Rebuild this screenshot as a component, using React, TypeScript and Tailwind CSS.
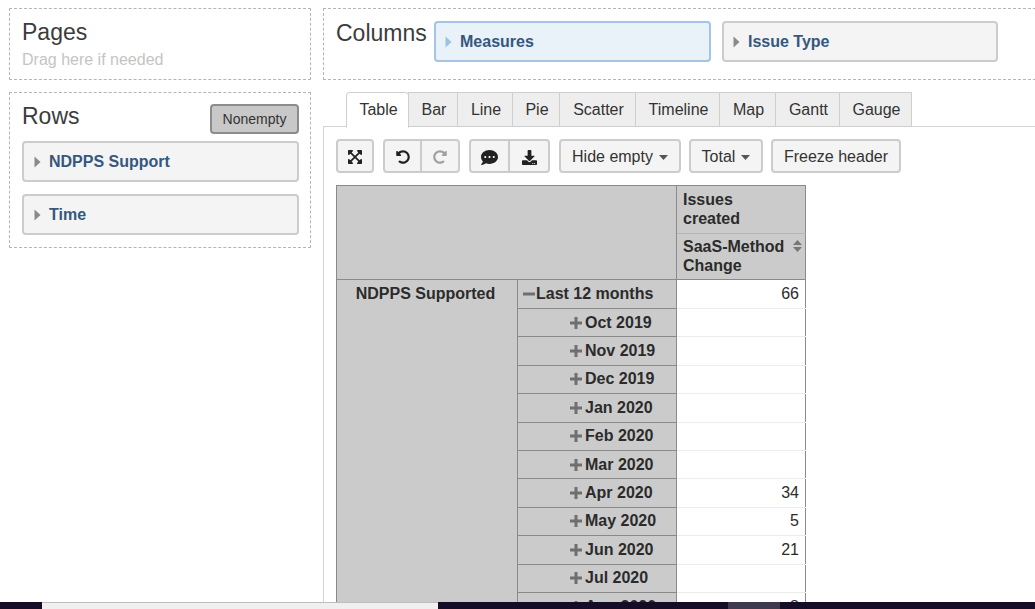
import React from "react";
import { FaExpandArrowsAlt, FaUndoAlt, FaRedoAlt, FaCommentDots, FaDownload } from "react-icons/fa";

const Caret = ({ c = "#8a8a8a" }: { c?: string }) => (
  <svg width="7" height="12" viewBox="0 0 7 12" className="shrink-0">
    <path d="M0.5 0.5 L6.5 6 L0.5 11.5 Z" fill={c} />
  </svg>
);

const Chip = ({ label, active, cls }: { label: string; active?: boolean; cls: string }) => (
  <div
    className={
      "flex items-center gap-[8px] h-[41px] rounded-[4px] border-2 font-bold text-[16px] text-[#34587e] " +
      (active ? "bg-[#e9f1f9] border-[#a3c4e4] " : "bg-[#f4f4f4] border-[#cccccc] ") +
      cls
    }
  >
    <Caret c={active ? "#9ec3e0" : "#8a8a8a"} />
    <span>{label}</span>
  </div>
);

const Btn = ({ children, cls = "" }: { children: React.ReactNode; cls?: string }) => (
  <div
    className={
      "h-[34px] flex items-center justify-center bg-[#f4f4f4] border-2 border-[#cccccc] rounded-[4px] text-[16px] text-[#333333] " +
      cls
    }
  >
    <span className="flex items-center translate-y-px">{children}</span>
  </div>
);

const Down = () => (
  <svg width="9" height="5" viewBox="0 0 9 5" className="ml-[6px]">
    <path d="M0 0 H9 L4.5 5 Z" fill="#555555" />
  </svg>
);

const Plus = ({ minus }: { minus?: boolean }) => (
  <svg width="12" height="12" viewBox="0 0 12 12" className={minus ? "shrink-0 mr-px" : "shrink-0 mr-[3px]"}>
    <rect x="0" y="4.5" width="12" height="3" fill="#6f6f6f" />
    {!minus && <rect x="4.5" y="0" width="3" height="12" fill="#6f6f6f" />}
  </svg>
);

const tabs = ["Table", "Bar", "Line", "Pie", "Scatter", "Timeline", "Map", "Gantt", "Gauge"];
const tabW = ["w-[63px]", "w-[50px]", "w-[56px]", "w-[48px]", "w-[77px]", "w-[85px]", "w-[57px]", "w-[65px]", "w-[73px]"];

const months: [string, string][] = [
  ["Oct 2019", ""],
  ["Nov 2019", ""],
  ["Dec 2019", ""],
  ["Jan 2020", ""],
  ["Feb 2020", ""],
  ["Mar 2020", ""],
  ["Apr 2020", "34"],
  ["May 2020", "5"],
  ["Jun 2020", "21"],
  ["Jul 2020", ""],
  ["Aug 2020", "8"],
];

export default function App() {
  return (
    <div className="w-[1035px] h-[609px] flex flex-col overflow-hidden bg-white text-[#333333] font-['Liberation_Sans',Arial,sans-serif]">
      <div className="flex-1 min-h-0 overflow-hidden flex pt-2 pl-[9px]">
        <div className="w-[302px] shrink-0 flex flex-col gap-3 mr-3">
          <div className="h-[72px] border border-dashed border-[#b5b5b5] pl-3 pt-[9px]">
            <div className="text-[23px] leading-[28px] text-[#3c3c3c]">Pages</div>
            <div className="text-[16px] leading-[20px] mt-[4px] text-[#c4c4c4]">Drag here if needed</div>
          </div>
          <div className="h-[156px] border border-dashed border-[#b5b5b5] pl-3 pr-[11px] pt-[11px]">
            <div className="flex justify-between h-[37px]">
              <div className="text-[23px] leading-[24px] text-[#3c3c3c]">Rows</div>
              <div className="h-[30px] w-[89px] flex items-center justify-center bg-[#c8c8c8] border-2 border-[#8c8c8c] rounded-[4px] text-[14px] text-[#333333]">
                Nonempty
              </div>
            </div>
            <Chip label="NDPPS Support" cls="w-full pl-[10px]" />
            <Chip label="Time" cls="w-full mt-3 pl-[10px]" />
          </div>
        </div>

        <div className="flex-1 min-w-0 flex flex-col">
          <div className="h-[72px] -mr-4 border border-dashed border-[#b5b5b5] flex pl-3 pt-3 shrink-0">
            <div className="text-[23px] leading-[24px] text-[#3c3c3c] w-[98px]">Columns</div>
            <Chip label="Measures" active cls="w-[277px] mr-[11px] pl-[9px]" />
            <Chip label="Issue Type" cls="w-[276px] pl-[9px]" />
          </div>

          <div className="flex pl-[23px] mt-3 h-[35px] shrink-0 border-b border-[#d4d4d4]">
            {tabs.map((t, i) => (
              <div
                key={t}
                className={
                  "h-[35px] flex items-center justify-center pl-[2px] text-[16px] border border-[#cfcfcf] -ml-px first:ml-0 " +
                  (tabW[i] ?? "") +
                  (i === 0
                    ? " bg-white border-b-white rounded-t-[4px] ml-0 h-[36px] z-10"
                    : " bg-[#eeeeee]")
                }
              >
                {t}
              </div>
            ))}
          </div>

          <div className="flex-1 min-h-0 border-l border-[#d4d4d4] pl-3 pt-3 overflow-hidden">
            <div className="flex h-[34px]">
              <Btn cls="w-[38px]"><FaExpandArrowsAlt size={16} color="#222222" /></Btn>
              <div className="flex ml-[9px]">
                <Btn cls="w-[39px] rounded-r-none"><FaUndoAlt size={14} color="#222222" /></Btn>
                <Btn cls="w-[38px] rounded-l-none border-l-0"><FaRedoAlt size={14} color="#a0a0a0" /></Btn>
              </div>
              <div className="flex ml-[9px]">
                <Btn cls="w-[41px] rounded-r-none"><FaCommentDots size={17} color="#222222" /></Btn>
                <Btn cls="w-[40px] rounded-l-none border-l-0"><FaDownload size={15} color="#222222" /></Btn>
              </div>
              <Btn cls="w-[122px] ml-[9px]">Hide empty<Down /></Btn>
              <Btn cls="w-[74px] ml-2">Total<Down /></Btn>
              <Btn cls="w-[130px] ml-2">Freeze header</Btn>
            </div>

            <table className="mt-3 border-collapse table-fixed w-[469px] text-[16px] leading-[18px] font-bold text-[#2b2b2b]">
              <colgroup>
                <col className="w-[181px]" />
                <col className="w-[159px]" />
                <col className="w-[129px]" />
              </colgroup>
              <tbody>
                <tr className="h-[48px]">
                  <td colSpan={2} rowSpan={2} className="bg-[#cbcbcb] border border-[#8a8a8a]" />
                  <td className="bg-[#cbcbcb] border border-[#8a8a8a] border-b-[#b5b5b5] pl-[6px] pr-[7px] align-top pt-[4px] leading-[19px]">
                    Issues
                    <br />
                    created
                  </td>
                </tr>
                <tr className="h-[46px]">
                  <td className="bg-[#cbcbcb] border border-[#8a8a8a] pl-[6px] pr-[3px] align-top pt-[3px] leading-[19px]">
                    <div className="flex justify-between">
                      <span>
                        SaaS-Method
                        <br />
                        Change
                      </span>
                      <svg width="9" height="12" viewBox="0 0 9 12" className="mt-[3px]">
                        <path d="M4.5 0 L9 5 H0 Z M0 7 H9 L4.5 12 Z" fill="#777777" />
                      </svg>
                    </div>
                  </td>
                </tr>
                <tr className="h-[29px]">
                  <td rowSpan={12} className="bg-[#cbcbcb] border border-[#8a8a8a] text-center align-top pt-[5px] pr-[3px]">
                    NDPPS Supported
                  </td>
                  <td className="bg-[#cbcbcb] border border-[#8a8a8a] pl-[5px]">
                    <div className="flex items-center">
                      <Plus minus />
                      <span>Last 12 months</span>
                    </div>
                  </td>
                  <td className="border-r border-r-[#8a8a8a] border-b border-b-[#ececec] text-right pr-[6px] font-normal">66</td>
                </tr>
                {months.map(([m, v]) => (
                  <tr key={m} className="h-[28.4px]">
                    <td className="bg-[#cbcbcb] border border-[#8a8a8a] border-t-[#a8a8a8] pl-[52px]">
                      <div className="flex items-center">
                        <Plus />
                        <span>{m}</span>
                      </div>
                    </td>
                    <td className="border-r border-r-[#8a8a8a] border-b border-b-[#ececec] text-right pr-[6px] font-normal">{v}</td>
                  </tr>
                ))}
              </tbody>
            </table>
          </div>
        </div>
      </div>

      <div className="h-[7px] shrink-0 flex bg-[#150c26]">
        <div className="w-[42px]" />
        <div className="w-[396px] bg-[#f0f0f0] border-t border-[#bdbdbd]" />
        <div className="w-[290px]" />
        <div className="w-[52px] bg-[#3f3a4b]" />
      </div>
    </div>
  );
}
